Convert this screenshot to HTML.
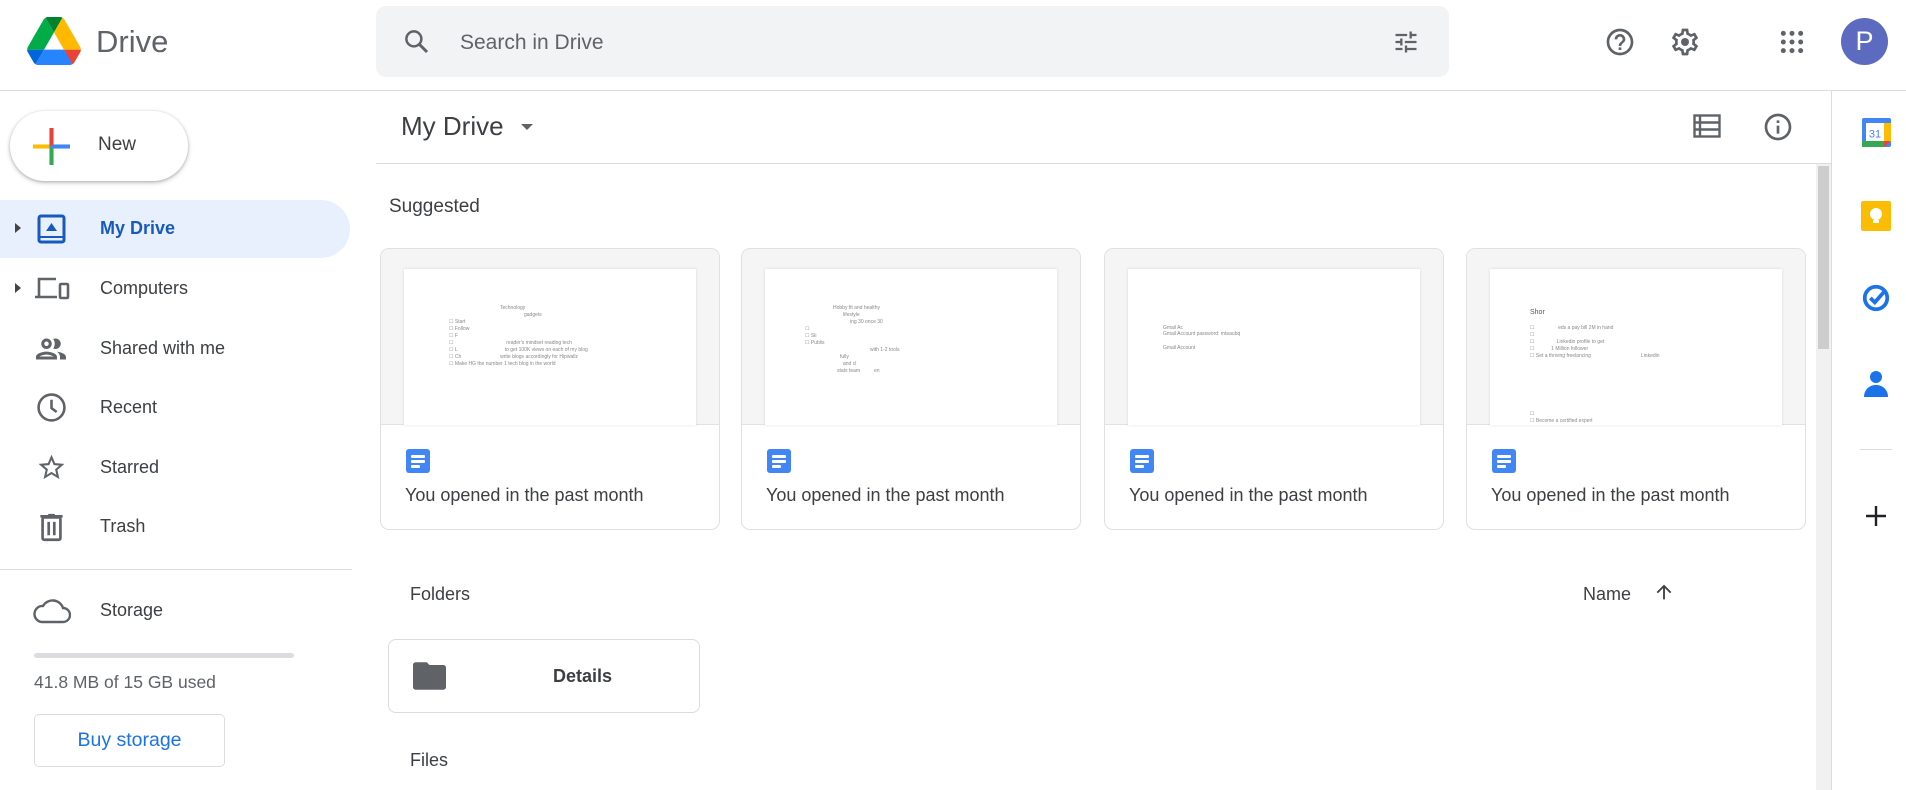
<!DOCTYPE html>
<html><head><meta charset="utf-8"><style>
*{box-sizing:border-box;margin:0;padding:0}
body{width:1906px;height:790px;overflow:hidden;background:#fff;font-family:"Liberation Sans",Arial,sans-serif;color:#3c4043;position:relative}
.a{position:absolute}
.nav{position:absolute;left:100px;font-size:18px;color:#3c4043}
.ico{position:absolute}
.card{position:absolute;top:248px;width:340px;height:282px;border:1px solid #e0e0e0;border-radius:9px;overflow:hidden;background:#fff}
.card .pv{position:absolute;left:0;top:0;right:0;height:176px;background:#f5f5f5;border-bottom:1px solid #e3e3e3}
.card .pg{position:absolute;left:23px;top:20px;width:292px;height:156px;background:#fff;box-shadow:0 0 3px rgba(0,0,0,.12)}
.card .di{position:absolute;left:25px;top:200px;width:24px;height:24px;background:#4285f4;border-radius:3px}
.card .di i{position:absolute;left:5px;height:3px;background:#fff;border-radius:1px}
.card .t{position:absolute;left:24px;top:236px;font-size:18px;color:#3c4043}
.pg div{position:absolute;font-size:5px;color:#888;white-space:nowrap}
</style></head><body>
<!-- header -->
<svg class="a" style="left:27px;top:17px" width="54" height="48" viewBox="0 0 87.3 78"><path d="m6.6 66.85 3.850 6.65c.8 1.4 1.95 2.5 3.3 3.3l13.75-23.8h-27.5c0 1.55.4 3.1 1.2 4.5z" fill="#0066da"/><path d="m43.65 25-13.75-23.8c-1.35.8-2.5 1.9-3.3 3.3l-25.4 44a9.06 9.06 0 0 0 -1.2 4.5h27.5z" fill="#00ac47"/><path d="m73.55 76.8c1.35-.8 2.5-1.9 3.3-3.3l1.6-2.75 7.65-13.25c.8-1.4 1.2-2.950 1.2-4.5h-27.502l5.852 11.5z" fill="#ea4335"/><path d="m43.65 25 13.75-23.8c-1.35-.8-2.9-1.2-4.5-1.2h-18.5c-1.6 0-3.15.45-4.5 1.2z" fill="#00832d"/><path d="m59.8 53h-32.3l-13.75 23.8c1.35.8 2.9 1.2 4.5 1.2h50.8c1.6 0 3.15-.45 4.5-1.2z" fill="#2684fc"/><path d="m73.4 26.5-12.7-22c-.8-1.4-1.95-2.5-3.3-3.3l-13.75 23.8 16.15 28h27.45c0-1.55-.4-3.1-1.2-4.5z" fill="#ffba00"/></svg>
<div class="a" style="left:96px;top:24px;font-size:31px;color:#5f6368">Drive</div>
<div class="a" style="left:376px;top:6px;width:1073px;height:71px;background:#f1f3f4;border-radius:10px"></div>
<svg class="a" style="left:402px;top:27px" width="30" height="30" viewBox="0 0 24 24"><circle cx="9.5" cy="9.5" r="6" fill="none" stroke="#5f6368" stroke-width="2"/><path d="M14 14l6 6" stroke="#5f6368" stroke-width="2.4"/></svg>
<div class="a" style="left:460px;top:31px;font-size:21px;color:#5f6368">Search in Drive</div>
<svg class="a" style="left:1392px;top:28px" width="28" height="28" viewBox="0 0 24 24" fill="#5f6368"><path d="M3 17v2h6v-2H3zM3 5v2h10V5H3zm10 16v-2h8v-2h-8v-2h-2v6h2zM7 9v2H3v2h4v2h2V9H7zm14 4v-2H11v2h10zm-6-4h2V7h4V5h-4V3h-2v6z"/></svg>
<svg class="a" style="left:1604px;top:26px" width="32" height="32" viewBox="0 0 24 24" fill="#5f6368"><path d="M11 18h2v-2h-2v2zm1-16C6.48 2 2 6.48 2 12s4.48 10 10 10 10-4.48 10-10S17.52 2 12 2zm0 18c-4.41 0-8-3.59-8-8s3.59-8 8-8 8 3.59 8 8-3.59 8-8 8zm0-14c-2.21 0-4 1.79-4 4h2c0-1.1.9-2 2-2s2 .9 2 2c0 2-3 1.75-3 5h2c0-2.25 3-2.5 3-5 0-2.21-1.79-4-4-4z"/></svg>
<svg class="a" style="left:1669px;top:26px" width="32" height="32" viewBox="0 0 24 24" fill="#5f6368"><path d="M19.43 12.98c.04-.32.07-.64.07-.98s-.03-.66-.07-.98l2.11-1.65c.19-.15.24-.42.12-.64l-2-3.46c-.12-.22-.39-.3-.61-.22l-2.49 1c-.52-.4-1.08-.73-1.690-.98l-.38-2.65A.49.49 0 0 0 14 2h-4c-.25 0-.46.18-.49.42l-.38 2.65c-.61.25-1.17.59-1.69.98l-2.49-1c-.23-.09-.49 0-.61.22l-2 3.46c-.13.22-.07.49.12.64l2.11 1.65c-.04.32-.07.65-.07.98s.03.66.07.98l-2.11 1.65c-.19.15-.24.42-.12.64l2 3.46c.12.22.39.3.61.22l2.49-1c.52.4 1.08.73 1.69.98l.38 2.65c.03.24.24.42.49.42h4c.25 0 .46-.18.49-.42l.38-2.65c.61-.25 1.17-.59 1.69-.98l2.49 1c.23.09.49 0 .61-.22l2-3.46c.12-.22.07-.49-.12-.64l-2.11-1.65zM17.45 11.27c.04.31.05.52.05.73s-.02.43-.05.73l-.14 1.13.89.7 1.08.84-.7 1.21-1.27-.51-1.04-.42-.9.68c-.43.32-.84.56-1.25.73l-1.06.43-.16 1.13-.2 1.35h-1.4l-.19-1.35-.16-1.13-1.06-.43c-.43-.18-.83-.41-1.23-.71l-.91-.7-1.06.43-1.27.51-.7-1.21 1.08-.84.89-.7-.14-1.13c-.03-.31-.05-.54-.05-.74s.02-.43.05-.73l.14-1.13-.89-.7-1.08-.84.7-1.21 1.27.51 1.04.42.9-.68c.43-.32.84-.56 1.25-.73l1.06-.43.16-1.13.2-1.35h1.39l.19 1.35.16 1.13 1.06.43c.43.18.83.41 1.23.71l.91.7 1.06-.43 1.27-.51.7 1.21-1.07.85-.89.7.14 1.13z"/><circle cx="12" cy="12" r="3"/></svg>
<svg class="a" style="left:1779px;top:29px" width="26" height="26" viewBox="0 0 24 24" fill="#5f6368"><circle cx="4" cy="4" r="2.3"/><circle cx="12" cy="4" r="2.3"/><circle cx="20" cy="4" r="2.3"/><circle cx="4" cy="12" r="2.3"/><circle cx="12" cy="12" r="2.3"/><circle cx="20" cy="12" r="2.3"/><circle cx="4" cy="20" r="2.3"/><circle cx="12" cy="20" r="2.3"/><circle cx="20" cy="20" r="2.3"/></svg>
<div class="a" style="left:1841px;top:18px;width:47px;height:47px;border-radius:50%;background:#5c6bc0;color:#fff;font-size:27px;text-align:center;line-height:47px">P</div>
<div class="a" style="left:0;top:90px;width:1906px;height:1px;background:#dadce0"></div>
<!-- sidebar -->
<div class="a" style="left:10px;top:111px;width:178px;height:70px;border-radius:35px;background:#fff;box-shadow:0 1px 3px rgba(60,64,67,.35),0 2px 6px rgba(60,64,67,.15)"></div>
<svg class="a" style="left:33px;top:128px" width="37" height="37" viewBox="0 0 36 36"><rect x="0" y="16" width="17" height="4" fill="#fbbc04"/><rect x="16" y="16" width="20" height="4" fill="#4285f4"/><rect x="16" y="0" width="4" height="17" fill="#ea4335"/><rect x="16" y="19" width="4" height="17" fill="#34a853"/></svg>
<div class="a" style="left:98px;top:134px;font-size:19px;color:#3c4043">New</div>
<div class="a" style="left:0;top:200px;width:350px;height:58px;background:#e8f0fe;border-radius:0 29px 29px 0"></div>
<div class="a" style="left:15px;top:223px;width:0;height:0;border-left:6px solid #444;border-top:5px solid transparent;border-bottom:5px solid transparent"></div>
<div class="a" style="left:15px;top:283px;width:0;height:0;border-left:6px solid #444;border-top:5px solid transparent;border-bottom:5px solid transparent"></div>
<svg class="a" style="left:37px;top:214px" width="29" height="30" viewBox="0 0 29 30"><rect x="2" y="2" width="25" height="26" rx="2" fill="none" stroke="#185abc" stroke-width="3"/><rect x="2" y="22" width="25" height="2" fill="#185abc"/><path d="M9 17l5.5-8 5.5 8z" fill="#185abc"/></svg>
<div class="nav" style="top:218px;color:#185abc;font-weight:bold">My Drive</div>
<svg class="a" style="left:34px;top:276px" width="36" height="24" viewBox="0 0 36 24" fill="none" stroke="#5f6368" stroke-width="2.6"><path d="M22 3H5v17"/><path d="M1 21h22"/><rect x="26" y="8" width="8" height="14" rx="1"/></svg>
<div class="nav" style="top:278px">Computers</div>
<svg class="a" style="left:33px;top:331px" width="36" height="36" viewBox="0 0 24 24" fill="#5f6368"><path d="M9 13.75c-2.34 0-7 1.17-7 3.5V19h14v-1.75c0-2.33-4.66-3.5-7-3.5zM4.34 17c.84-.58 2.87-1.25 4.66-1.25s3.82.67 4.66 1.25H4.34zM9 12c1.93 0 3.5-1.57 3.5-3.5S10.93 5 9 5 5.5 6.57 5.5 8.5 7.07 12 9 12zm0-5c.83 0 1.5.67 1.5 1.5S9.83 10 9 10s-1.5-.67-1.5-1.5S8.17 7 9 7zm7.04 6.81c1.16.84 1.96 1.96 1.96 3.44V19h4v-1.75c0-2.02-3.5-3.170-5.96-3.44zM15 12c1.93 0 3.5-1.57 3.5-3.5S16.93 5 15 5c-.54 0-1.04.13-1.5.35.63.89 1 1.98 1 3.15s-.37 2.26-1 3.15c.46.22.96.35 1.5.35z"/></svg>
<div class="nav" style="top:338px">Shared with me</div>
<svg class="a" style="left:36px;top:392px" width="31" height="31" viewBox="0 0 24 24" fill="none" stroke="#5f6368" stroke-width="2"><circle cx="12" cy="12" r="10"/><path d="M12 6v6.5l4 3"/></svg>
<div class="nav" style="top:397px">Recent</div>
<svg class="a" style="left:36px;top:452px" width="31" height="31" viewBox="0 0 24 24" fill="#5f6368"><path d="M22 9.24l-7.19-.62L12 2 9.19 8.63 2 9.24l5.46 4.73L5.82 21 12 17.27 18.18 21l-1.63-7.03L22 9.24zM12 15.4l-3.76 2.27 1-4.28-3.32-2.88 4.38-.38L12 6.1l1.71 4.04 4.38.38-3.32 2.88 1 4.28L12 15.4z"/></svg>
<div class="nav" style="top:457px">Starred</div>
<svg class="a" style="left:38px;top:513px" width="27" height="29" viewBox="0 0 22 26" fill="none" stroke="#5f6368" stroke-width="2.4"><path d="M1 3h20"/><path d="M8 2h6"/><rect x="3" y="4" width="16" height="20" rx="1.5"/><path d="M8.5 8v12M13.5 8v12"/></svg>
<div class="nav" style="top:516px">Trash</div>
<div class="a" style="left:0;top:569px;width:352px;height:1px;background:#dadce0"></div>
<svg class="a" style="left:33px;top:598px" width="38" height="26" viewBox="0 0 38 26" fill="none" stroke="#5f6368" stroke-width="2.4"><path d="M9 24h21a7 7 0 0 0 0-14 11 11 0 0 0-20-2A8 8 0 0 0 9 24z"/></svg>
<div class="nav" style="top:600px">Storage</div>
<div class="a" style="left:34px;top:653px;width:260px;height:5px;border-radius:3px;background:#dadce0"></div>
<div class="a" style="left:34px;top:672px;font-size:17.5px;color:#5f6368">41.8 MB of 15 GB used</div>
<div class="a" style="left:34px;top:714px;width:191px;height:53px;border:1px solid #dadce0;border-radius:5px;color:#1a73e8;font-size:19.5px;text-align:center;line-height:51px">Buy storage</div>
<!-- main -->
<div class="a" style="left:401px;top:111px;font-size:26px;color:#3c4043">My Drive</div>
<div class="a" style="left:521px;top:124px;width:0;height:0;border-top:6px solid #5f6368;border-left:6px solid transparent;border-right:6px solid transparent"></div>
<svg class="a" style="left:1693px;top:114px" width="28" height="24" viewBox="0 0 28 24" fill="none" stroke="#5f6368" stroke-width="2.4"><rect x="1.5" y="1.5" width="25" height="21"/><path d="M1.5 8.5h25M1.5 15.5h25M7 2v20"/></svg>
<svg class="a" style="left:1762px;top:111px" width="32" height="32" viewBox="0 0 24 24" fill="#5f6368"><path d="M11 7h2v2h-2zm0 4h2v6h-2zm1-9C6.48 2 2 6.48 2 12s4.48 10 10 10 10-4.48 10-10S17.52 2 12 2zm0 18c-4.41 0-8-3.59-8-8s3.59-8 8-8 8 3.59 8 8-3.59 8-8 8z"/></svg>
<div class="a" style="left:376px;top:163px;width:1456px;height:1px;background:#dadce0"></div>
<div class="a" style="left:1831px;top:91px;width:1px;height:699px;background:#dadce0"></div>
<div class="a" style="left:1816px;top:164px;width:15px;height:626px;background:#f1f1f1"></div>
<div class="a" style="left:1818px;top:166px;width:11px;height:183px;background:#cdcdcd"></div>
<div class="a" style="left:389px;top:196px;font-size:19px;color:#3c4043">Suggested</div>

<div class="card" style="left:380px"><div class="pv"><div class="pg">
<div style="left:96px;top:36px">Technology</div><div style="left:120px;top:43px">gadgets</div>
<div style="left:45px;top:50px">☐ Start</div><div style="left:45px;top:57px">☐ Follow</div><div style="left:45px;top:64px">☐ F</div>
<div style="left:45px;top:71px">☐ &nbsp;&nbsp;&nbsp;&nbsp;&nbsp;&nbsp;&nbsp;&nbsp;&nbsp;&nbsp;&nbsp;&nbsp;&nbsp;&nbsp;&nbsp;&nbsp;&nbsp;&nbsp;&nbsp;&nbsp;&nbsp;&nbsp;&nbsp;&nbsp;&nbsp;&nbsp;&nbsp;&nbsp;&nbsp;&nbsp;&nbsp;&nbsp;&nbsp;&nbsp;&nbsp;&nbsp; reader's mindset reading tech</div>
<div style="left:45px;top:78px">☐ L &nbsp;&nbsp;&nbsp;&nbsp;&nbsp;&nbsp;&nbsp;&nbsp;&nbsp;&nbsp;&nbsp;&nbsp;&nbsp;&nbsp;&nbsp;&nbsp;&nbsp;&nbsp;&nbsp;&nbsp;&nbsp;&nbsp;&nbsp;&nbsp;&nbsp;&nbsp;&nbsp;&nbsp;&nbsp;&nbsp;&nbsp;&nbsp; to get 100K views on each of my blog</div>
<div style="left:45px;top:85px">☐ Ch &nbsp;&nbsp;&nbsp;&nbsp;&nbsp;&nbsp;&nbsp;&nbsp;&nbsp;&nbsp;&nbsp;&nbsp;&nbsp;&nbsp;&nbsp;&nbsp;&nbsp;&nbsp;&nbsp;&nbsp;&nbsp;&nbsp;&nbsp;&nbsp;&nbsp;&nbsp; write blogs accordingly for Hipwallz</div>
<div style="left:45px;top:92px">☐ Make HG the number 1 tech blog in the world</div>
</div></div><div class="di"><i style="top:6px;width:14px"></i><i style="top:11px;width:14px"></i><i style="top:16px;width:9px"></i></div><div class="t">You opened in the past month</div></div>

<div class="card" style="left:741px"><div class="pv"><div class="pg">
<div style="left:68px;top:36px">Hobby fit and healthy</div><div style="left:78px;top:43px">lifestyle</div><div style="left:85px;top:50px">ing 30 once 30</div>
<div style="left:40px;top:57px">☐</div><div style="left:40px;top:64px">☐ Sli</div><div style="left:40px;top:71px">☐ Publis</div>
<div style="left:105px;top:78px">with 1-2 tools</div><div style="left:75px;top:85px">fully</div><div style="left:78px;top:92px">and cl</div><div style="left:72px;top:99px">stats team &nbsp;&nbsp;&nbsp;&nbsp;&nbsp;&nbsp;&nbsp;&nbsp; en</div>
</div></div><div class="di"><i style="top:6px;width:14px"></i><i style="top:11px;width:14px"></i><i style="top:16px;width:9px"></i></div><div class="t">You opened in the past month</div></div>

<div class="card" style="left:1104px"><div class="pv"><div class="pg">
<div style="left:35px;top:56px">Gmail Ac</div><div style="left:35px;top:62px">Gmail Account password: mteaubq</div><div style="left:35px;top:76px">Gmail Account</div>
</div></div><div class="di"><i style="top:6px;width:14px"></i><i style="top:11px;width:14px"></i><i style="top:16px;width:9px"></i></div><div class="t">You opened in the past month</div></div>

<div class="card" style="left:1466px"><div class="pv"><div class="pg">
<div style="left:40px;top:40px;font-size:7px;color:#555">Shor</div>
<div style="left:40px;top:56px">☐ &nbsp;&nbsp;&nbsp;&nbsp;&nbsp;&nbsp;&nbsp;&nbsp;&nbsp;&nbsp;&nbsp;&nbsp;&nbsp;&nbsp;&nbsp; eds a pay bill 2M in hand</div>
<div style="left:40px;top:63px">☐</div><div style="left:40px;top:70px">☐ &nbsp;&nbsp;&nbsp;&nbsp;&nbsp;&nbsp;&nbsp;&nbsp;&nbsp;&nbsp;&nbsp;&nbsp;&nbsp;&nbsp; Linkedin profile to get</div>
<div style="left:40px;top:77px">☐ &nbsp;&nbsp;&nbsp;&nbsp;&nbsp;&nbsp;&nbsp;&nbsp;&nbsp;&nbsp; 1 Million follower</div><div style="left:40px;top:84px">☐ Set a thriving freelancing &nbsp;&nbsp;&nbsp;&nbsp;&nbsp;&nbsp;&nbsp;&nbsp;&nbsp;&nbsp;&nbsp;&nbsp;&nbsp;&nbsp;&nbsp;&nbsp;&nbsp;&nbsp;&nbsp;&nbsp;&nbsp;&nbsp;&nbsp;&nbsp;&nbsp;&nbsp;&nbsp;&nbsp;&nbsp;&nbsp;&nbsp;&nbsp;&nbsp;&nbsp; Linkedin</div>
<div style="left:40px;top:142px">☐</div><div style="left:40px;top:149px">☐ Become a certified expert</div>
</div></div><div class="di"><i style="top:6px;width:14px"></i><i style="top:11px;width:14px"></i><i style="top:16px;width:9px"></i></div><div class="t">You opened in the past month</div></div>

<div class="a" style="left:410px;top:584px;font-size:18px;color:#3c4043">Folders</div>
<div class="a" style="left:1583px;top:584px;font-size:18px;color:#3c4043">Name</div>
<svg class="a" style="left:1653px;top:580px" width="22" height="24" viewBox="0 0 24 24" fill="#3c4043"><path d="M4 12l1.41 1.41L11 7.83V20h2V7.83l5.58 5.59L20 12l-8-8-8 8z"/></svg>
<div class="a" style="left:388px;top:639px;width:312px;height:74px;border:1px solid #dadce0;border-radius:8px"></div>
<svg class="a" style="left:413px;top:662px" width="33" height="28" viewBox="0 0 24 20" fill="#5f6368"><path d="M10 0H2C.9 0 0 .9 0 2v16c0 1.1.9 2 2 2h20c1.1 0 2-.9 2-2V4c0-1.1-.9-2-2-2H12L10 0z"/></svg>
<div class="a" style="left:553px;top:666px;font-size:18px;font-weight:bold;color:#3c4043">Details</div>
<div class="a" style="left:410px;top:750px;font-size:18px;color:#3c4043">Files</div>
<!-- right panel -->
<svg class="a" style="left:1862px;top:118px" width="29" height="29" viewBox="0 0 29 29"><rect x="0" y="0" width="29" height="29" rx="2" fill="#4285f4"/><rect x="4" y="5" width="21" height="18" fill="#fff"/><rect x="22" y="5" width="7" height="19" fill="#fbbc04"/><rect x="0" y="23" width="24" height="6" fill="#34a853"/><path d="M22 29l7-6h-7z" fill="#ea4335"/><text x="13" y="19.5" font-size="11" fill="#4285f4" text-anchor="middle" font-family="Liberation Sans">31</text></svg>
<svg class="a" style="left:1861px;top:201px" width="30" height="30" viewBox="0 0 30 30"><rect width="30" height="30" rx="2" fill="#fbbc04"/><circle cx="15" cy="13" r="6" fill="#fff"/><rect x="12" y="19" width="6" height="3" fill="#fff"/></svg>
<svg class="a" style="left:1861px;top:283px" width="30" height="30" viewBox="0 0 24 24"><circle cx="12" cy="12" r="9" fill="none" stroke="#1a73e8" stroke-width="3"/><path d="M7.5 12l3.5 3.5 8-9" fill="none" stroke="#1a73e8" stroke-width="3"/></svg>
<svg class="a" style="left:1864px;top:369px" width="24" height="28" viewBox="0 0 24 28" fill="#1a73e8"><circle cx="12" cy="8" r="6"/><path d="M0 28c0-7 5-12 12-12s12 5 12 12z"/></svg>
<div class="a" style="left:1860px;top:449px;width:32px;height:1px;background:#dadce0"></div>
<svg class="a" style="left:1864px;top:504px" width="24" height="24" viewBox="0 0 24 24"><path d="M12 2v20M2 12h20" stroke="#202124" stroke-width="2.4"/></svg>
</body></html>
